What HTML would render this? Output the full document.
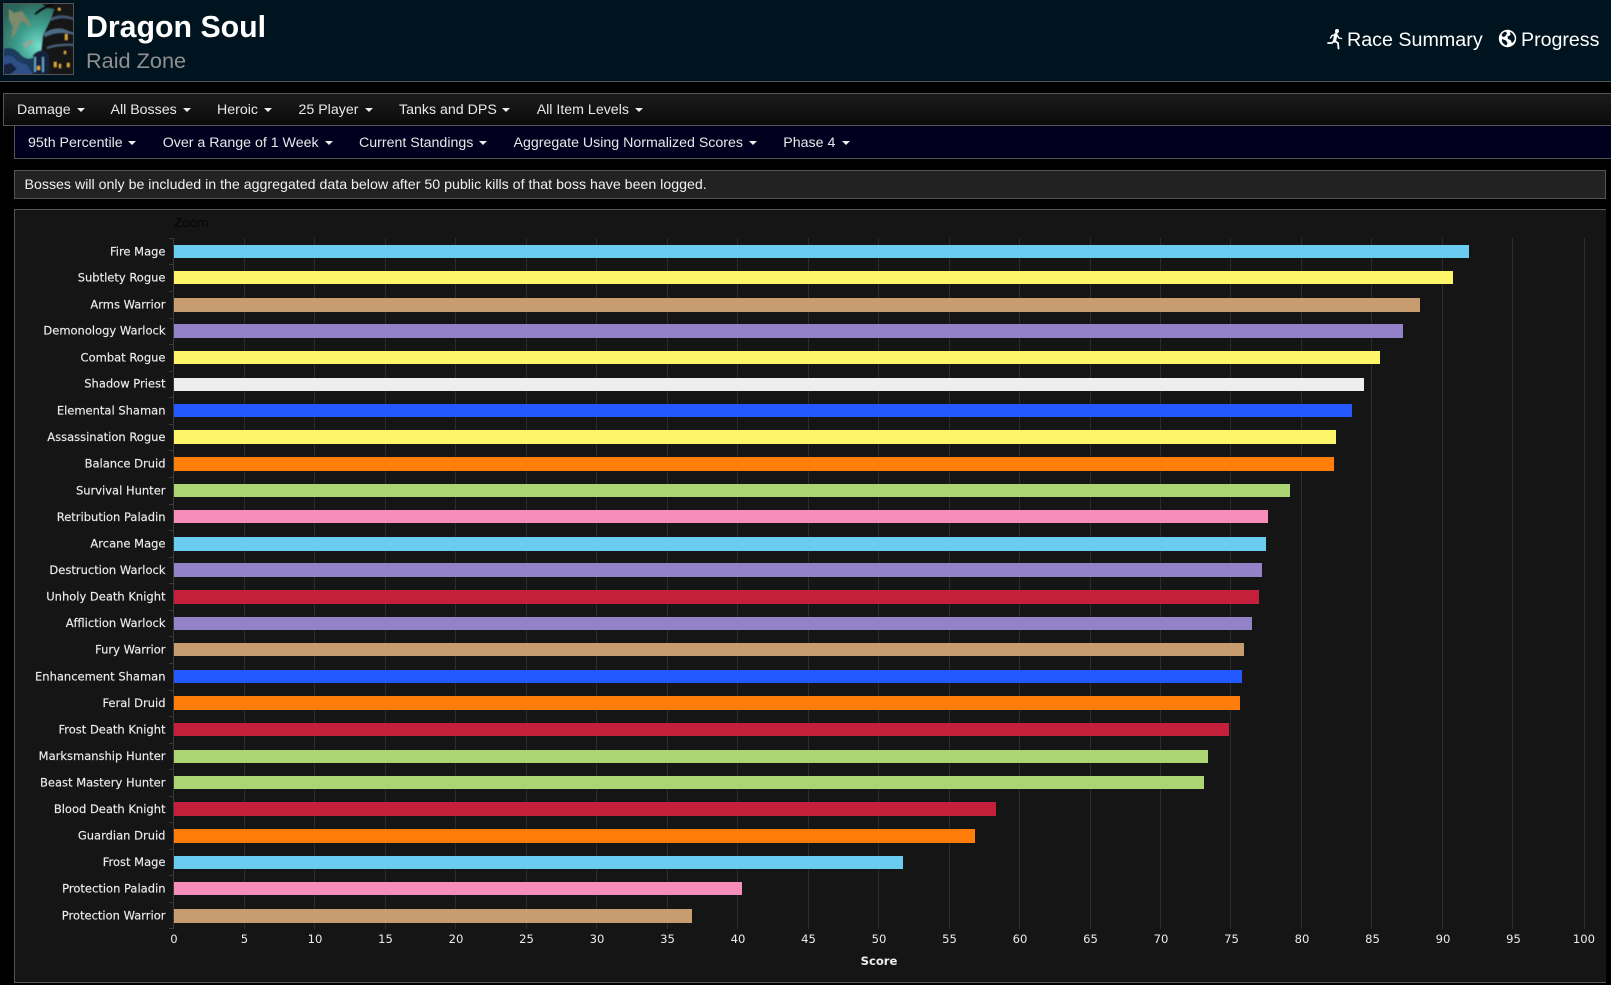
<!DOCTYPE html>
<html lang="en"><head><meta charset="utf-8"><title>Dragon Soul</title>
<style>
html,body{margin:0;padding:0;background:#000;width:1611px;height:985px;overflow:hidden}
body{position:relative;font-family:"Liberation Sans",Arial,sans-serif;color:#fff}
.a{position:absolute;white-space:nowrap}
#hd{left:0;top:0;width:1611px;height:81px;background:#00141f;border-bottom:1px solid #555}
#r1{position:absolute;left:3px;top:93px;width:1608px;height:33px;box-sizing:border-box;border:1px solid #555;border-right:0;background:linear-gradient(#1c1c1c,#0a0a0a)}
#r2{position:absolute;left:14px;top:126px;width:1597px;height:33px;box-sizing:border-box;border-left:1px solid #555;border-bottom:1px solid #555;background:#00001e}
.n{position:absolute;font-size:14.2px;line-height:16px;color:#e8e8e8;white-space:nowrap}
.c{position:absolute;width:0;height:0;border-left:4px solid transparent;border-right:4px solid transparent;border-top:4px solid #eee}
#al{position:absolute;left:14px;top:170px;width:1592px;height:29px;box-sizing:border-box;border:1px solid #555;background:#222;font-size:14.19px;line-height:18px;color:#f0f0f0;padding:5px 0 0 9.5px}
#pn{position:absolute;left:14px;top:209px;width:1592px;height:774px;box-sizing:border-box;border:1px solid #555;border-right:0;background:#151515}
</style></head><body>
<div class="a" id="hd"></div>
<svg class="a" style="left:3px;top:3px" width="71" height="72" viewBox="0 0 71 72">
<defs>
<radialGradient id="t" cx="0.5" cy="0.6" r="0.65"><stop offset="0" stop-color="#78dccb"/><stop offset="0.45" stop-color="#3f9f8e"/><stop offset="1" stop-color="#2a6358"/></radialGradient>
<filter id="b" x="-5%" y="-5%" width="110%" height="110%"><feGaussianBlur stdDeviation="0.55"/></filter>
</defs>
<g filter="url(#b)">
<rect width="71" height="72" fill="url(#t)"/>
<path d="M0 46 Q10 42 18 52 Q24 58 32 54 L34 72 L0 72Z" fill="#1d3a5e"/>
<path d="M0 54 Q8 50 14 58 L24 62 L30 72 L0 72Z" fill="#2f4f88"/>
<path d="M0 62 L8 60 L14 66 L6 72 L0 72Z" fill="#16233f"/>
<path d="M38 0 L71 0 L71 72 L42 72 L42 52 L38 50 L40 32 L44 24 L48 16 L51 6 L44 5Z" fill="#121218"/>
<path d="M31 11 Q38 3 50 1 L50 3 Q40 6 33 12Z" fill="#080810"/>
<path d="M40 31 Q50 24 60 26 L71 30 L71 32 Q56 27 42 34Z" fill="#4d6a84"/>
<path d="M48 15 Q58 10 71 15 L71 17 Q58 13 48 18Z" fill="#3f566e"/>
<path d="M44 44 Q54 40 71 41 L71 43 Q56 42 44 46Z" fill="#465f78"/>
<path d="M30 52 Q36 46 42 48 L46 52 L46 72 L30 72Z" fill="#14203a"/>
<rect x="31" y="54" width="2" height="15" fill="#5f9fc0"/><rect x="39" y="54" width="2" height="15" fill="#5f9fc0"/>
<g fill="#d8a838"><rect x="62" y="31" width="2.5" height="6"/><rect x="51" y="59" width="2.5" height="5"/><rect x="56" y="61" width="2" height="4"/><rect x="64" y="60" width="2.5" height="4"/><rect x="55" y="5" width="2.5" height="2.5"/><rect x="34" y="63" width="3" height="4"/><rect x="61" y="48" width="2" height="3"/></g>
<path d="M6 6 L11 10 L19 8 L26 18 L28 25 L20 18 L17 20 L13 30 L8 36 L10 24 L6 16Z" fill="#7d8a6c"/>
<path d="M20 41 L27 37 L32 40 L26 41 L23 46Z" fill="#97a594"/>
</g>
<rect x=".5" y=".5" width="70" height="71" fill="none" stroke="#555"/>
</svg>
<div class="a" style="left:86px;top:10px;font-size:30.3px;line-height:36px;font-weight:bold">Dragon Soul</div>
<div class="a" style="left:86px;top:48px;font-size:21.7px;line-height:26px;color:#8f8f8f">Raid Zone</div>
<svg class="a" style="left:1326px;top:27px" width="20" height="24" viewBox="0 0 20 24" fill="none" stroke="#fff" stroke-linecap="round" stroke-linejoin="round">
<circle cx="11" cy="4" r="2" fill="#fff" stroke="none"/>
<path d="M10 7 L8.5 14" stroke-width="3.2"/>
<path d="M8.5 14 L12 16 L12.5 21.5" stroke-width="1.8"/>
<path d="M8 14 L6 16 L2 16" stroke-width="1.8"/>
<path d="M9 8 L6 8.5 L4.5 11" stroke-width="1.4"/>
<path d="M11 8 L13 11 L15.5 11.5" stroke-width="1.4"/>
</svg>
<div class="a" style="left:1347px;top:28px;font-size:19.7px;line-height:24px">Race Summary</div>
<svg class="a" style="left:1498px;top:29px" width="19" height="19" viewBox="0 0 19 19">
<circle cx="9.5" cy="9.5" r="8.7" fill="#fff"/>
<path d="M3.5 6 Q5 3 8 2.6 L9 4.5 L7 7.5 L5 8Z" fill="#00141f"/>
<path d="M12 2.8 Q16.5 5 16.8 10 Q15.8 13 14 14 L12.5 11 L10 10 L9.5 7.5 L12.5 6Z" fill="#00141f"/>
<path d="M4 10 L8 11.5 L9.5 14 L8.5 16.5 Q5.5 15.5 4 12.5Z" fill="#00141f"/>
</svg>
<div class="a" style="left:1521px;top:28px;font-size:19.6px;line-height:24px">Progress</div>

<div id="r1"></div>
<div id="r2"></div>
<span class="n" style="left:17px;top:102px">Damage</span><i class="c" style="left:77px;top:108px"></i>
<span class="n" style="left:110.5px;top:102px">All Bosses</span><i class="c" style="left:183px;top:108px"></i>
<span class="n" style="left:217px;top:102px">Heroic</span><i class="c" style="left:264px;top:108px"></i>
<span class="n" style="left:298.5px;top:102px">25 Player</span><i class="c" style="left:365px;top:108px"></i>
<span class="n" style="left:399px;top:102px">Tanks and DPS</span><i class="c" style="left:502px;top:108px"></i>
<span class="n" style="left:536.7px;top:102px">All Item Levels</span><i class="c" style="left:635px;top:108px"></i>
<span class="n" style="left:28px;top:135px">95th Percentile</span><i class="c" style="left:128px;top:141px"></i>
<span class="n" style="left:162.7px;top:135px">Over a Range of 1 Week</span><i class="c" style="left:325px;top:141px"></i>
<span class="n" style="left:359px;top:135px">Current Standings</span><i class="c" style="left:479px;top:141px"></i>
<span class="n" style="left:513.5px;top:135px">Aggregate Using Normalized Scores</span><i class="c" style="left:749px;top:141px"></i>
<span class="n" style="left:783.3px;top:135px">Phase 4</span><i class="c" style="left:842px;top:141px"></i>

<div id="al">Bosses will only be included in the aggregated data below after 50 public kills of that boss have been logged.</div>
<div id="pn"></div>

<svg class="a" style="left:0;top:0" width="1611" height="985" viewBox="0 0 1611 985" font-family="'DejaVu Sans',sans-serif">
<text x="174" y="227" font-size="12" fill="#060606">Zoom</text>
<g stroke="#2c2c2c" stroke-width="1" shape-rendering="crispEdges">
<path d="M244.5 238V929M314.5 238V929M385.5 238V929M455.5 238V929M526.5 238V929M596.5 238V929M667.5 238V929M737.5 238V929M808.5 238V929M878.5 238V929M949.5 238V929M1019.5 238V929M1090.5 238V929M1160.5 238V929M1230.5 238V929M1301.5 238V929M1371.5 238V929M1442.5 238V929M1512.5 238V929M1584.5 238V929"/>
</g>
<g stroke="#3a3a3a" stroke-width="1" shape-rendering="crispEdges">
<path d="M173.5 238V929M169 238.5H173M169 264.5H173M169 291.5H173M169 318.5H173M169 344.5H173M169 371.5H173M169 397.5H173M169 424.5H173M169 450.5H173M169 477.5H173M169 504.5H173M169 530.5H173M169 557.5H173M169 583.5H173M169 610.5H173M169 636.5H173M169 663.5H173M169 690.5H173M169 716.5H173M169 743.5H173M169 769.5H173M169 796.5H173M169 822.5H173M169 849.5H173M169 875.5H173M169 902.5H173M169 928.5H173"/>
</g>
<g shape-rendering="crispEdges">
<rect x="174" y="245" width="1295" height="13" fill="#69ccf0"/>
<rect x="174" y="271" width="1279" height="13" fill="#fff569"/>
<rect x="174" y="298" width="1246" height="14" fill="#c79c6e"/>
<rect x="174" y="324" width="1229" height="14" fill="#9482c9"/>
<rect x="174" y="351" width="1206" height="13" fill="#fff569"/>
<rect x="174" y="378" width="1190" height="13" fill="#eeeeee"/>
<rect x="174" y="404" width="1178" height="13" fill="#2459ff"/>
<rect x="174" y="430" width="1162" height="14" fill="#fff569"/>
<rect x="174" y="457" width="1160" height="14" fill="#ff7d0a"/>
<rect x="174" y="484" width="1116" height="13" fill="#abd473"/>
<rect x="174" y="510" width="1094" height="13" fill="#f58cba"/>
<rect x="174" y="537" width="1092" height="14" fill="#69ccf0"/>
<rect x="174" y="563" width="1088" height="14" fill="#9482c9"/>
<rect x="174" y="590" width="1085" height="14" fill="#c41f3b"/>
<rect x="174" y="617" width="1078" height="13" fill="#9482c9"/>
<rect x="174" y="643" width="1070" height="13" fill="#c79c6e"/>
<rect x="174" y="670" width="1068" height="13" fill="#2459ff"/>
<rect x="174" y="696" width="1066" height="14" fill="#ff7d0a"/>
<rect x="174" y="723" width="1055" height="13" fill="#c41f3b"/>
<rect x="174" y="750" width="1034" height="13" fill="#abd473"/>
<rect x="174" y="776" width="1030" height="13" fill="#abd473"/>
<rect x="174" y="802" width="822" height="14" fill="#c41f3b"/>
<rect x="174" y="829" width="801" height="14" fill="#ff7d0a"/>
<rect x="174" y="856" width="729" height="13" fill="#69ccf0"/>
<rect x="174" y="882" width="568" height="13" fill="#f58cba"/>
<rect x="174" y="909" width="518" height="14" fill="#c79c6e"/>
</g>
<g font-size="11.5" fill="#ececec" stroke="#ececec" stroke-width="0.15" text-anchor="end">
<text x="165.5" y="255.5">Fire Mage</text>
<text x="165.5" y="281.5">Subtlety Rogue</text>
<text x="165.5" y="308.5">Arms Warrior</text>
<text x="165.5" y="334.5">Demonology Warlock</text>
<text x="165.5" y="361.5">Combat Rogue</text>
<text x="165.5" y="387.5">Shadow Priest</text>
<text x="165.5" y="414.5">Elemental Shaman</text>
<text x="165.5" y="441">Assassination Rogue</text>
<text x="165.5" y="467.5">Balance Druid</text>
<text x="165.5" y="494.5">Survival Hunter</text>
<text x="165.5" y="521">Retribution Paladin</text>
<text x="165.5" y="547.5">Arcane Mage</text>
<text x="165.5" y="574">Destruction Warlock</text>
<text x="165.5" y="600.5">Unholy Death Knight</text>
<text x="165.5" y="627">Affliction Warlock</text>
<text x="165.5" y="653.5">Fury Warrior</text>
<text x="165.5" y="680.5">Enhancement Shaman</text>
<text x="165.5" y="707">Feral Druid</text>
<text x="165.5" y="733.5">Frost Death Knight</text>
<text x="165.5" y="760">Marksmanship Hunter</text>
<text x="165.5" y="786.5">Beast Mastery Hunter</text>
<text x="165.5" y="813">Blood Death Knight</text>
<text x="165.5" y="839.5">Guardian Druid</text>
<text x="165.5" y="866">Frost Mage</text>
<text x="165.5" y="892.5">Protection Paladin</text>
<text x="165.5" y="919.5">Protection Warrior</text>
</g>
<g font-size="11.6" fill="#ececec" text-anchor="middle">
<text x="174" y="943">0</text><text x="244.5" y="943">5</text><text x="315" y="943">10</text><text x="385.5" y="943">15</text><text x="456" y="943">20</text><text x="526.5" y="943">25</text><text x="597" y="943">30</text><text x="667.5" y="943">35</text><text x="738" y="943">40</text><text x="808.5" y="943">45</text><text x="879" y="943">50</text><text x="949.5" y="943">55</text><text x="1020" y="943">60</text><text x="1090.5" y="943">65</text><text x="1161" y="943">70</text><text x="1231.5" y="943">75</text><text x="1302" y="943">80</text><text x="1372.5" y="943">85</text><text x="1443" y="943">90</text><text x="1513.5" y="943">95</text><text x="1584" y="943">100</text>
</g>
<text x="879" y="965" font-size="11.6" font-weight="bold" fill="#eee" text-anchor="middle">Score</text>
</svg>
</body></html>
